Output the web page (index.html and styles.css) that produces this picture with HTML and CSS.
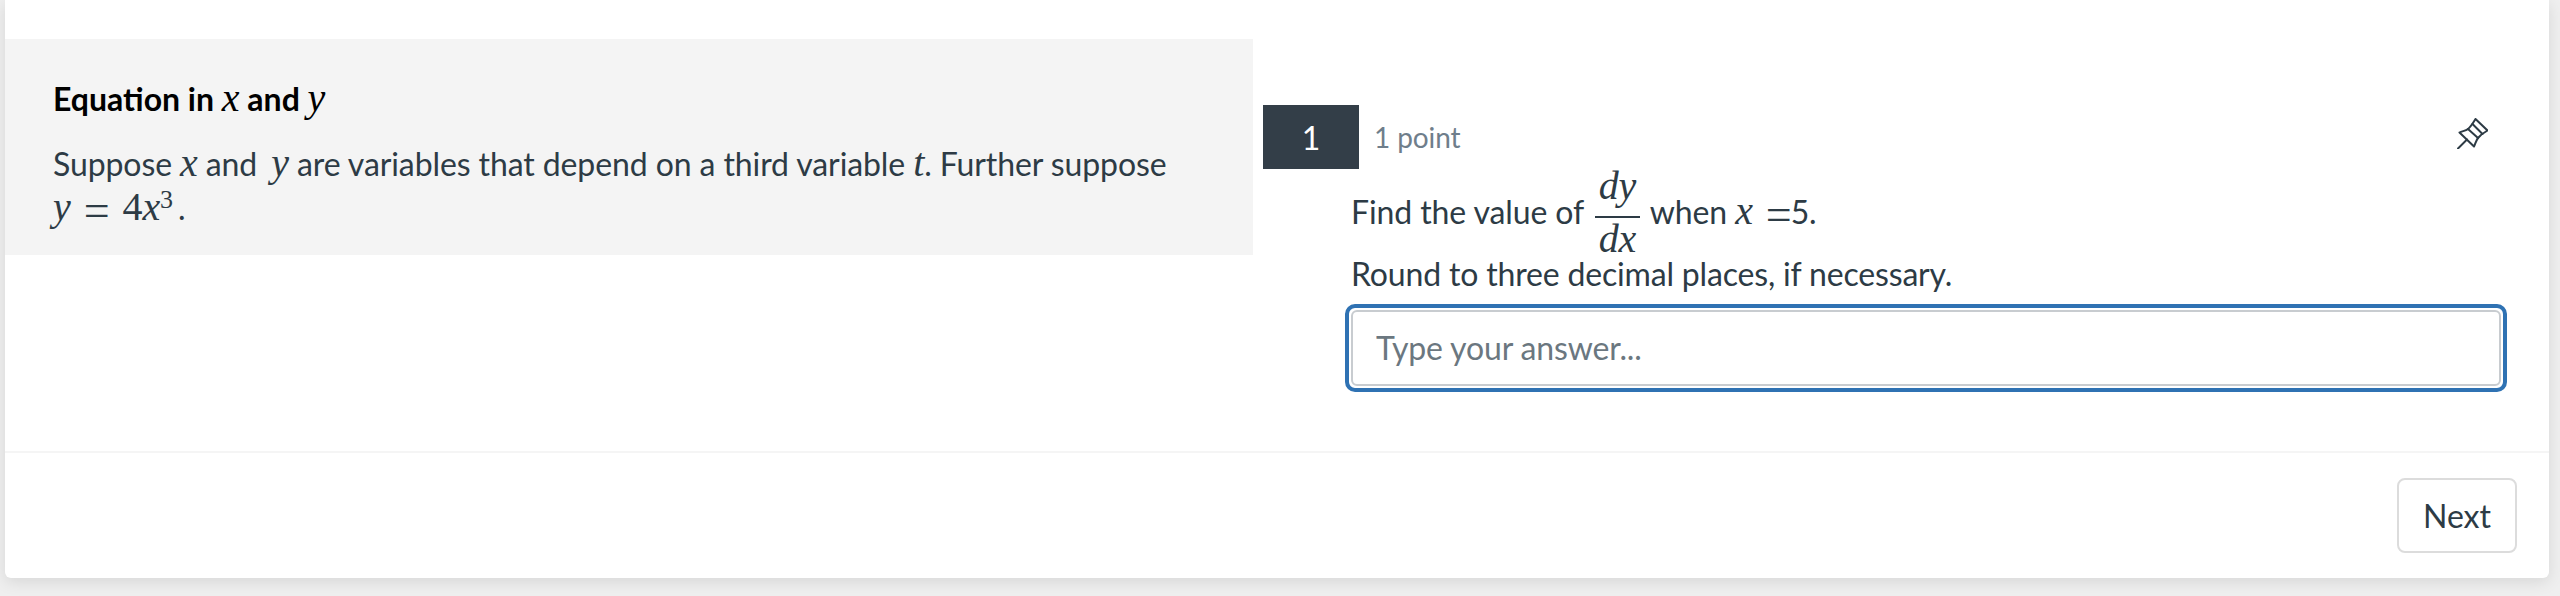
FILE: index.html
```html
<!DOCTYPE html>
<html lang="en">
<head>
<meta charset="utf-8">
<title>Quiz question</title>
<link rel="stylesheet" href="styles.css">
</head>
<body>
<main class="card">
  <div class="content">
    <section class="passage">
      <h2 class="passage-title">Equation in <i class="m">x</i> and <i class="m">y</i></h2>
      <p class="passage-text">Suppose <i class="m">x</i> and <i class="m m-gap">y</i> are variables that depend on a third variable <i class="m">t</i>. Further suppose <span class="eq"><i class="m">y</i><span class="rel">=</span><span class="rm">4</span><i class="m">x</i><sup class="sup">3</sup>.</span></p>
    </section>
    <section class="question">
      <header class="q-head">
        <div class="q-num">1</div>
        <div class="q-points">1 point</div>
        <svg class="pin" viewBox="0 0 31 31" fill="none" stroke="#2d3b45" stroke-width="2" stroke-linecap="round" stroke-linejoin="round" aria-hidden="true">
          <path d="M1 30.500 10 21.500"/>
          <path d="M2.500 14.500C5 13 8.500 13 11 11 14 8.500 16 5 18.500 1L30.500 12.500C27 14.500 23.500 17 21 20 19 22.500 18.500 25.500 17 28.500Z"/>
          <path d="M11 11 21 20M15.500 6 25.500 16"/>
        </svg>
      </header>
      <div class="q-body">
        <p class="q-line">Find the value of <span class="frac"><span class="num"><i class="m">dy</i></span><span class="den"><i class="m">dx</i></span></span> when <i class="m">x</i><span class="rel-q">=</span>5.</p>
        <p class="q-line2">Round to three decimal places, if necessary.</p>
        <div class="ring"><input class="answer" type="text" placeholder="Type your answer..."></div>
      </div>
    </section>
  </div>
  <footer class="foot"><button class="next" type="button">Next</button></footer>
</main>
</body>
</html>
```
FILE: styles.css
```css
* { box-sizing: border-box; }
html, body { margin: 0; height: 596px; overflow: hidden; }
body { background: #efefef; font-family: Lato, "Liberation Sans", sans-serif; color: #2d3b45; padding: 0 11px 18px 5px; }
.card { height: 578px; background: #fff; border-radius: 0 0 6px 6px; box-shadow: 0 4px 16px rgba(0,0,0,.1); display: flex; flex-direction: column; }
.content { height: 453px; padding-top: 39px; display: grid; grid-template-columns: 1248px 1fr; border-bottom: 2px solid #f5f5f5; }
.passage { height: 216px; background: #f4f4f4; padding: 40px 48px 0; }
.passage-title { margin: 0; font-size: 32px; line-height: 40px; font-weight: 700; color: #000; }
.passage-text { margin: 23px 0 0; font-size: 32px; line-height: 44px; letter-spacing: -.1px; }
.m { font-family: "Liberation Serif", serif; font-style: italic; font-weight: 400; font-size: 40px; line-height: 0; }
.m-gap { margin-left: 6px; }
.rm { font-family: "Liberation Serif", serif; font-size: 40px; line-height: 0; }
.rel, .rel-q { font-family: "Liberation Serif", serif; font-size: 46px; line-height: 0; vertical-align: -6px; }
.rel { margin: 0 13px; }
.rel-q { margin: 0 -1px 0 13px; }
.eq { white-space: nowrap; }
.sup { font-family: "Liberation Serif", serif; font-size: 26px; line-height: 0; margin-right: 5px; }
.question { padding: 66px 0 0 10px; }
.q-head { display: flex; align-items: center; height: 64px; }
.q-num { width: 96px; height: 64px; background: #333e48; color: #fff; font-size: 32px; display: flex; align-items: center; justify-content: center; }
.q-points { margin-left: 15px; font-size: 28px; color: #6f7e8b; letter-spacing: -.1px; }
.pin { width: 31px; height: 31px; margin: -8px 61px 0 auto; }
.q-body { padding: 0 42px 0 88px; }
.q-line { margin: 0; font-size: 32px; line-height: 40px; letter-spacing: -.1px; white-space: nowrap; }
.frac { display: inline-flex; flex-direction: column; align-items: center; vertical-align: 25px; line-height: 36px; margin: 0 2px 0 3px; }
.num { border-bottom: 2px solid #2d3b45; padding: 0 4px 11px; }
.den { padding-top: 4px; }
.q-line2 { margin: -5px 0 0; font-size: 32px; line-height: 42px; letter-spacing: -.17px; }
.ring { margin: 9px 0 0 -6px; height: 88px; border: 4px solid #2f72b3; border-radius: 10px; padding: 2px; }
.answer { width: 100%; height: 76px; border: 2px solid #c8ccd0; border-radius: 6px; padding: 0 23px 2px; font: 32px Lato, sans-serif; letter-spacing: -.15px; background: #fff; outline: none; }
.answer::placeholder { color: #6b7780; opacity: 1; }
.foot { flex: 1; display: flex; justify-content: flex-end; align-items: flex-start; padding: 25px 32px 0 0; }
.next { width: 120px; height: 75px; background: #fff; border: 2px solid #dcdcdc; border-radius: 8px; font: 32px Lato, sans-serif; color: #2d3b45; }
```
